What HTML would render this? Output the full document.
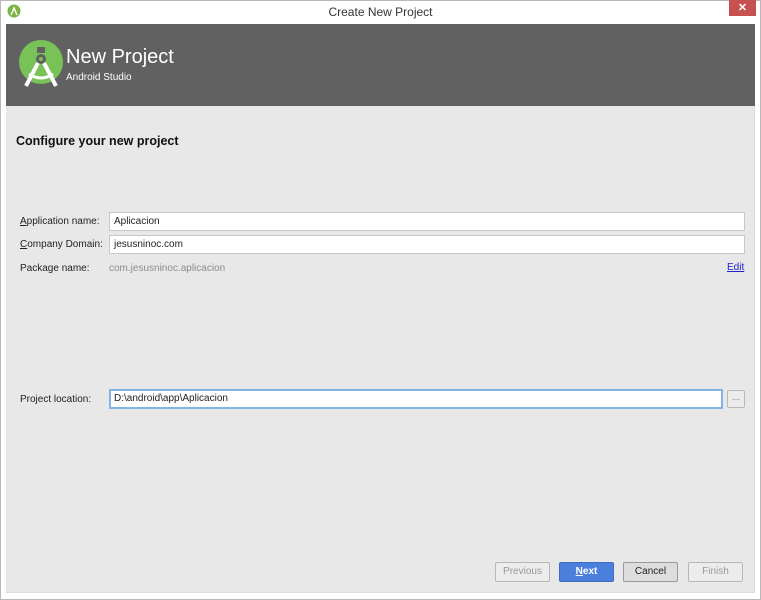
<!DOCTYPE html>
<html><head><style>
*{margin:0;padding:0;box-sizing:border-box}
body{width:761px;height:600px;background:#fff;position:relative;overflow:hidden;font-family:"Liberation Sans",sans-serif;font-size:10px;color:#222}
.abs{position:absolute}
.frame{left:0;top:0;width:761px;height:600px;border:1px solid #b9b9b9}
.title{left:0;top:5px;width:761px;text-align:center;font-size:12px;color:#333}
.close{left:729px;top:0;width:27px;height:16px;background:#c75050;color:#fff;text-align:center;font-size:11px;line-height:16px;font-weight:bold}
.head{left:6px;top:24px;width:749px;height:82px;background:#616161}
.body{left:6px;top:106px;width:749px;height:487px;background:#e8e8e8;border-right:1px solid #ddd;border-bottom:1px solid #ddd}
.inp{background:#fff;border:1px solid #c8c8c8;height:19px;padding-left:4px;line-height:17px;font-size:10px}
.btn{height:20px;border:1px solid #b8b8b8;border-radius:2px;text-align:center;line-height:18px;font-size:10px}
u{text-decoration:underline}
</style></head><body>
<div class="abs frame"></div>
<svg class="abs" style="left:7px;top:4px" width="14" height="14"><circle cx="7" cy="7" r="6.5" fill="#7cb342"/><path d="M4 11 L7 4 L10 11" stroke="#fff" stroke-width="1.5" fill="none"/></svg>
<div class="abs title">Create New Project</div>
<div class="abs close">✕</div>
<div class="abs head"></div>
<svg class="abs" style="left:17px;top:38px" width="48" height="52">
<circle cx="24" cy="24" r="22" fill="#78c257"/>
<rect x="20" y="9" width="8" height="6" fill="#616161"/>
<circle cx="24" cy="21" r="5" fill="#616161"/><circle cx="24" cy="21" r="2" fill="#78c257"/>
<path d="M21 25 L9 48 M27 25 L39 48" stroke="#fff" stroke-width="4"/>
<path d="M12 36 Q24 44 36 36" stroke="#fff" stroke-width="3" fill="none"/>
</svg>
<div class="abs" style="left:66px;top:46px;font-size:20px;color:#fff">New Project</div>
<div class="abs" style="left:66px;top:72px;font-size:10px;color:#fff">Android Studio</div>
<div class="abs body"></div>
<div class="abs" style="left:16px;top:134px;font-size:12.5px;font-weight:bold;color:#111">Configure your new project</div>
<div class="abs" style="left:20px;top:216px"><u>A</u>pplication name:</div>
<div class="abs inp" style="left:109px;top:212px;width:636px">Aplicacion</div>
<div class="abs" style="left:20px;top:239px"><u>C</u>ompany Domain:</div>
<div class="abs inp" style="left:109px;top:235px;width:636px">jesusninoc.com</div>
<div class="abs" style="left:20px;top:263px">Package name:</div>
<div class="abs" style="left:109px;top:263px;color:#8c8c8c">com.jesusninoc.aplicacion</div>
<div class="abs" style="left:727px;top:262px;color:#2020d0;text-decoration:underline;font-size:10px">Edit</div>
<div class="abs" style="left:20px;top:394px">Project location:</div>
<div class="abs inp" style="left:109px;top:389px;width:614px;height:20px;border:2px solid #82b4e8;line-height:16px;padding-left:3px">D:\android\app\Aplicacion</div>
<div class="abs btn" style="left:727px;top:390px;width:18px;height:18px;line-height:14px;color:#777;background:#ececec">...</div>
<div class="abs btn" style="left:495px;top:562px;width:55px;color:#999;background:#ececec">Previous</div>
<div class="abs btn" style="left:559px;top:562px;width:55px;background:#4a7fdc;border-color:#3d6dc4;color:#fff;font-weight:bold"><u>N</u>ext</div>
<div class="abs btn" style="left:623px;top:562px;width:55px;background:#ddd;border-color:#999">Cancel</div>
<div class="abs btn" style="left:688px;top:562px;width:55px;color:#999;background:#ececec">Finish</div>
</body></html>
